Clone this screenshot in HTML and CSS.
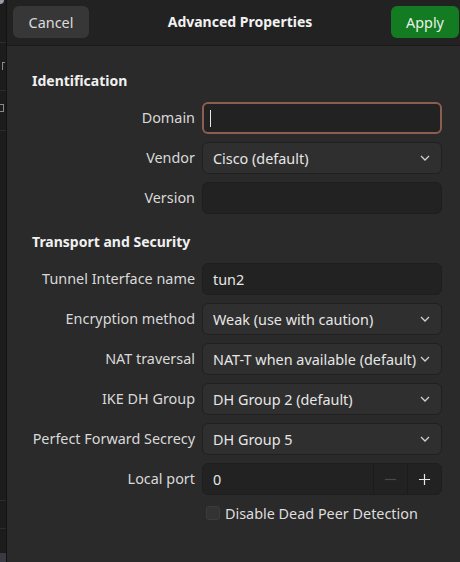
FILE: index.html
```html
<!DOCTYPE html>
<html>
<head>
<meta charset="utf-8">
<link rel="stylesheet" href="styles.css">
</head>
<body>
<div class="screen">
  <div class="behind">
    <span class="behind-dot"></span>
    <span class="behind-line l1"></span>
    <span class="behind-mark m1"></span>
    <span class="behind-line l2"></span>
    <span class="behind-mark m2"></span>
    <span class="behind-line l3"></span>
    <span class="behind-line l4"></span>
    <span class="behind-line l5"></span>
    <span class="behind-bar"></span>
  </div>
  <div class="dialog">
    <header class="header">
      <button class="btn cancel">Cancel</button>
      <div class="title">Advanced Properties</div>
      <button class="btn apply">Apply</button>
    </header>
    <main class="content">
      <div class="grid">
        <div class="section first">Identification</div>

        <div class="label">Domain</div>
        <div class="field entry focus"><span class="cursor"></span></div>

        <div class="label">Vendor</div>
        <div class="field combo"><span class="value">Cisco (default)</span><svg class="chev" viewBox="0 0 10 6"><path d="M1 1l4 4 4-4"/></svg></div>

        <div class="label">Version</div>
        <div class="field entry"></div>

        <div class="section">Transport and Security</div>

        <div class="label">Tunnel Interface name</div>
        <div class="field entry"><span class="value">tun2</span></div>

        <div class="label">Encryption method</div>
        <div class="field combo"><span class="value">Weak (use with caution)</span><svg class="chev" viewBox="0 0 10 6"><path d="M1 1l4 4 4-4"/></svg></div>

        <div class="label">NAT traversal</div>
        <div class="field combo"><span class="value">NAT-T when available (default)</span><svg class="chev" viewBox="0 0 10 6"><path d="M1 1l4 4 4-4"/></svg></div>

        <div class="label">IKE DH Group</div>
        <div class="field combo"><span class="value">DH Group 2 (default)</span><svg class="chev" viewBox="0 0 10 6"><path d="M1 1l4 4 4-4"/></svg></div>

        <div class="label">Perfect Forward Secrecy</div>
        <div class="field combo"><span class="value">DH Group 5</span><svg class="chev" viewBox="0 0 10 6"><path d="M1 1l4 4 4-4"/></svg></div>

        <div class="label">Local port</div>
        <div class="field spin">
          <span class="value spin-value">0</span>
          <span class="spin-btn disabled"><svg viewBox="0 0 14 14"><path d="M1 7h12"/></svg></span>
          <span class="spin-btn"><svg viewBox="0 0 14 14"><path d="M1 7h12M7 1v12"/></svg></span>
        </div>

        <div class="check-row">
          <span class="checkbox"></span>
          <span class="check-label">Disable Dead Peer Detection</span>
        </div>
      </div>
    </main>
  </div>
</div>
</body>
</html>
```

FILE: styles.css
```css
* { box-sizing: border-box; }
html, body {
  margin: 0;
  padding: 0;
  width: 460px;
  height: 562px;
  overflow: hidden;
  background: #1d1d1d;
}
body {
  font-family: "Noto Sans", "Open Sans", sans-serif;
  font-size: 14.4px;
  color: #dedede;
}
.screen {
  display: flex;
  width: 460px;
  height: 562px;
}
.behind {
  position: relative;
  flex: none;
  width: 7px;
  background: #1c1c1c;
  border-right: 1px solid #121212;
  overflow: hidden;
}
.behind-dot {
  position: absolute;
  left: -4px; top: -4px;
  width: 8px; height: 8px;
  border-radius: 50%;
  background: #9a9aa6;
}
.behind-line {
  position: absolute;
  left: 0; width: 6px; height: 1px;
  background: #2c2c2c;
}
.l1 { top: 42px; }
.l2 { top: 90px; }
.l3 { top: 130px; }
.l4 { top: 500px; }
.l5 { top: 528px; }
.behind-mark {
  position: absolute;
  left: 0;
  width: 4px;
  border-color: #8a8a8a;
  border-style: solid;
}
.m1 { top: 62px; height: 8px; border-width: 1px 0 0 1px; width: 3px; left: 2px; }
.m2 { top: 104px; height: 8px; border-width: 1px 1px 1px 0; }
.behind-bar {
  position: absolute;
  left: 0; bottom: 0;
  width: 6px; height: 9px;
  background: #3a3a44;
}
.dialog {
  flex: 1;
  display: flex;
  flex-direction: column;
  background: #2a2a2a;
}
.header {
  height: 46px;
  flex: none;
  display: flex;
  align-items: flex-start;
  padding: 6px 1px 0 6px;
  background: #222222;
  border-bottom: 1px solid #1a1a1a;
}
.btn {
  height: 32px;
  border: none;
  border-radius: 6px;
  font-family: inherit;
  font-size: 14.4px;
  padding: 0;
}
.cancel {
  width: 76px;
  background: #373737;
  color: #dcdcdc;
}
.apply {
  width: 68px;
  background: #137b22;
  color: #e6f2e6;
}
.title {
  flex: 1;
  text-align: center;
  line-height: 32px;
  font-weight: bold;
  font-size: 14px;
  color: #f2f2f2;
}
.content {
  padding: 25px 0 0 25px;
}
.grid {
  display: grid;
  grid-template-columns: 163px 240px;
  column-gap: 7px;
  row-gap: 8px;
  align-items: center;
}
.section {
  grid-column: 1 / -1;
  font-weight: bold;
  font-size: 14px;
  line-height: 20px;
  color: #f0f0f0;
  margin: 10px 0 3px;
}
.section.first { margin-top: 0; }
.label {
  text-align: right;
  color: #d9d9d9;
  line-height: 20px;
  white-space: nowrap;
}
.field {
  height: 32px;
  border-radius: 6px;
  display: flex;
  align-items: center;
  padding-left: 10px;
  color: #e6e6e6;
  white-space: nowrap;
}
.entry {
  background: #222222;
  border: 1px solid #1e1e1e;
}
.entry.focus {
  border: 2px solid #8d5d52;
  padding-left: 6px;
}
.cursor {
  width: 1px;
  height: 17px;
  background: #e8e8e8;
}
.combo {
  background: #2f2f2f;
  border: 1px solid #202020;
  padding-right: 11px;
}
.combo .value { flex: 1; }
.chev {
  width: 10px;
  height: 6px;
  flex: none;
  fill: none;
  stroke: #d0d0d0;
  stroke-width: 1.3;
}
.spin {
  background: #222222;
  border: 1px solid #1e1e1e;
  padding-right: 0;
}
.spin-value { flex: 1; }
.spin-btn {
  width: 34px;
  height: 100%;
  display: flex;
  align-items: center;
  justify-content: center;
  border-left: 1px solid #1b1b1b;
}
.spin-btn svg {
  width: 13px;
  height: 13px;
  fill: none;
  stroke: #e8e8e8;
  stroke-width: 1.3;
}
.spin-btn.disabled svg { stroke: #4a4a4a; }
.check-row {
  grid-column: 2;
  display: flex;
  align-items: center;
  height: 20px;
  padding-left: 4px;
}
.checkbox {
  width: 14px;
  height: 14px;
  border-radius: 3px;
  background: #333333;
  border: 1px solid #3c3c3c;
  margin-right: 5px;
}
.check-label {
  color: #dedede;
}
```
